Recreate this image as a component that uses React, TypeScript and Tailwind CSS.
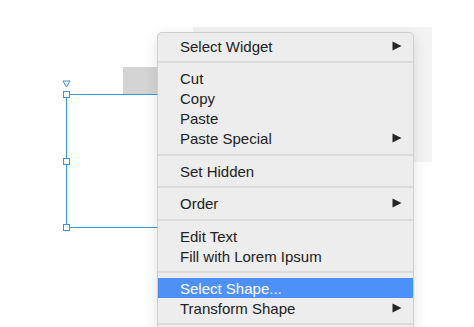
import React from "react";

type Item = { label: string; sub?: boolean; active?: boolean };

const groups: { items: Item[]; gap: number }[] = [
  { items: [{ label: "Select Widget", sub: true }], gap: 12 },
  {
    items: [
      { label: "Cut" },
      { label: "Copy" },
      { label: "Paste" },
      { label: "Paste Special", sub: true },
    ],
    gap: 13,
  },
  { items: [{ label: "Set Hidden" }], gap: 12 },
  { items: [{ label: "Order", sub: true }], gap: 13 },
  { items: [{ label: "Edit Text" }, { label: "Fill with Lorem Ipsum" }], gap: 12 },
  {
    items: [
      { label: "Select Shape...", active: true },
      { label: "Transform Shape", sub: true },
    ],
    gap: 12,
  },
];

function Arrow({ white }: { white?: boolean }) {
  return (
    <svg width="10" height="10" viewBox="0 0 10 10" className="shrink-0">
      <path d="M0.5 0.5 L9.5 5 L0.5 9.5 Z" fill={white ? "#ffffff" : "#262626"} />
    </svg>
  );
}

function Row({ item }: { item: Item }) {
  return (
    <div
      className={
        item.active
          ? "flex h-[20px] items-center justify-between bg-[#4d91f7] pl-[22px] pr-[11px] text-white"
          : "flex h-[20px] items-center justify-between pl-[22px] pr-[11px] text-[#222222]"
      }
    >
      <span className="pt-px">{item.label}</span>
      {item.sub && <Arrow white={item.active} />}
    </div>
  );
}

function Separator({ h }: { h: number }) {
  return (
    <div className="flex items-center" style={{ height: h }}>
      <div className="h-[2px] w-full bg-[#dcdcdc]" />
    </div>
  );
}

function Handle({ top }: { top: number }) {
  return (
    <div
      className="absolute left-[63px] h-[7px] w-[7px] border border-[#3a95de] bg-white"
      style={{ top }}
    />
  );
}

export default function App() {
  return (
    <div
      className="relative h-[327px] w-[474px] overflow-hidden bg-white"
      style={{ fontFamily: '"Liberation Sans", Arial, sans-serif' }}
    >
      {/* canvas widgets */}
      <div className="absolute left-[193px] top-[27px] h-[135px] w-[239px] bg-[#f3f3f3]" />
      <div className="absolute left-[123px] top-[67px] h-[27px] w-[40px] bg-[#d4d4d4]" />
      <div className="absolute left-[66px] top-[94px] h-[134px] w-[130px] border-[1.5px] border-[#3a95de]" />
      <svg width="9" height="8" viewBox="0 0 9 8" className="absolute left-[62px] top-[80px]">
        <path d="M1 1 L8 1 L4.5 7 Z" fill="white" stroke="#3a95de" strokeWidth="1" />
      </svg>
      <Handle top={91} />
      <Handle top={158} />
      <Handle top={224} />

      {/* context menu */}
      <div className="absolute left-[157px] top-[32px] w-[257px] rounded-[5px] border border-[#cfcfcf] bg-[#ededed] pb-[20px] pt-[3px] text-[15px] leading-[20px] shadow-[0_4px_14px_rgba(0,0,0,0.12)]">
        {groups.map((g, i) => (
          <div key={i}>
            {g.items.map((it) => (
              <Row key={it.label} item={it} />
            ))}
            <Separator h={g.gap} />
          </div>
        ))}
      </div>
    </div>
  );
}
